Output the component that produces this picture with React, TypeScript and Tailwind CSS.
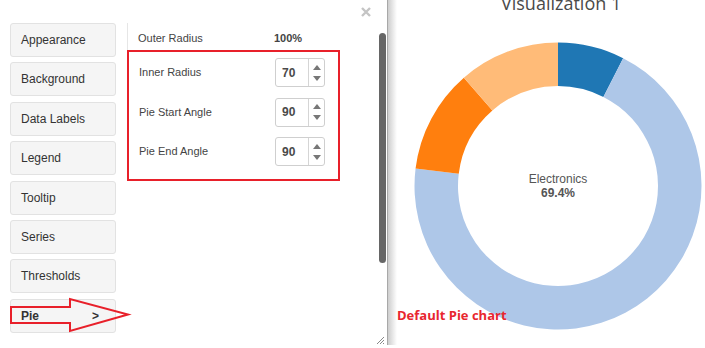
import React from 'react';

const navItems = ['Appearance', 'Background', 'Data Labels', 'Legend', 'Tooltip', 'Series', 'Thresholds', 'Pie'];

const segments = [
  { from: 0, to: 27, color: '#1f77b4' },
  { from: 27, to: 277, color: '#aec7e8' },
  { from: 277, to: 319, color: '#ff7f0e' },
  { from: 319, to: 360, color: '#ffbb78' },
];

// angles in degrees, clockwise from 12 o'clock
function arcPath(a0: number, a1: number, r0: number, r1: number, cx = 150, cy = 150) {
  const pt = (a: number, r: number) => {
    const rad = (a * Math.PI) / 180;
    return [cx + r * Math.sin(rad), cy - r * Math.cos(rad)];
  };
  const large = a1 - a0 > 180 ? 1 : 0;
  const [x0, y0] = pt(a0, r1);
  const [x1, y1] = pt(a1, r1);
  const [x2, y2] = pt(a1, r0);
  const [x3, y3] = pt(a0, r0);
  return `M${x0} ${y0} A${r1} ${r1} 0 ${large} 1 ${x1} ${y1} L${x2} ${y2} A${r0} ${r0} 0 ${large} 0 ${x3} ${y3} Z`;
}

function Spinner() {
  return (
    <div className="flex flex-col items-center justify-center gap-[6px] w-[16px] border-l border-[#d5d5d5]">
      <svg width="8" height="5" viewBox="0 0 8 5">
        <path d="M0 5 L4 0 L8 5 Z" fill="#777" />
      </svg>
      <svg width="8" height="5" viewBox="0 0 8 5">
        <path d="M0 0 L8 0 L4 5 Z" fill="#777" />
      </svg>
    </div>
  );
}

function NumberField({ label, value }: { label: string; value: string }) {
  return (
    <div className="flex items-center h-[29px]">
      <div className="w-[136px] text-[11px] text-[#444]">{label}</div>
      <div className="flex h-[29px] w-[50px] rounded-[3px] border border-[#cfcfcf] bg-white">
        <div className="flex-1 flex items-center pl-[6px] text-[12px] font-bold text-[#4a4a4a]">{value}</div>
        <Spinner />
      </div>
    </div>
  );
}

export default function App() {
  return (
    <div className="relative flex w-[705px] h-[348px] overflow-hidden bg-white font-['Liberation_Sans',Arial,sans-serif]">
      {/* Settings dialog */}
      <div className="relative flex w-[387px] h-[345px] shrink-0 bg-white">
        <nav className="flex flex-col gap-[5.4px] pl-[10px] pt-[23px]">
          {navItems.map((item) => (
            <button
              key={item}
              className="flex items-center justify-between w-[106px] h-[34px] px-[10px] rounded-[3px] border border-[#e2e2e2] bg-[#f5f5f5] text-left text-[12px] text-[#333]"
            >
              <span className={item === 'Pie' ? 'font-bold' : ''}>{item}</span>
              {item === 'Pie' && <span className="font-bold pr-[6px]">&gt;</span>}
            </button>
          ))}
        </nav>

        <div className="ml-[11px] mt-[23px] w-[252px]">
          <div className="border-l border-[#e6e6e6]">
            <div className="flex items-center h-[27px] pl-[10px] pt-[4px]">
              <div className="w-[136px] text-[11px] text-[#444]">Outer Radius</div>
              <div className="text-[11px] font-bold text-[#444]">100%</div>
            </div>
            <div className="ml-[-1px] w-[213px] border-2 border-[#e8202a] pl-[10px] pt-[6px] pb-[13px] flex flex-col gap-[10.5px]">
              <NumberField label="Inner Radius" value="70" />
              <NumberField label="Pie Start Angle" value="90" />
              <NumberField label="Pie End Angle" value="90" />
            </div>
          </div>
        </div>

        <div className="ml-auto mr-[1px] mt-[33px] w-[7px] h-[230px] rounded-full bg-[#666]" />

        {/* close */}
        <svg className="absolute left-[361px] top-[7px]" width="10" height="10" viewBox="0 0 10 10">
          <path d="M1 1 L9 9 M9 1 L1 9" stroke="#c4c4c4" strokeWidth="2.4" />
        </svg>

        {/* resize grip */}
        <svg className="absolute left-[376px] top-[336px]" width="8" height="8" viewBox="0 0 8 8">
          <path d="M1 8 L8 1 M4 8 L8 4 M7 8 L8 7" stroke="#888" strokeWidth="1" />
        </svg>

        {/* annotation arrow */}
        <svg className="absolute left-0 top-[296px]" width="132" height="38" viewBox="0 296 132 38">
          <path
            d="M11 307 L70 307 L70 299 L128 314.5 L70 331 L70 323 L11 323 Z"
            fill="none"
            stroke="#e8202a"
            strokeWidth="2"
          />
        </svg>
      </div>

      {/* Chart area */}
      <div className="relative flex-1 flex flex-col border-l border-[#a8a8a8] h-[345px]">
        <div className="absolute left-0 top-0 w-[9px] h-full bg-linear-to-r from-[#cdcdcd] to-white/0" />
        <div className="mt-[-9px] pl-[113px] text-[18px] leading-[24px] text-[#4a4a4a] font-['Open_Sans',sans-serif]">
          Visualization 1
        </div>
        <svg className="ml-[20px] mt-[21px]" width="300" height="300" viewBox="0 0 300 300">
          {segments.map((s) => (
            <path key={s.color} d={arcPath(s.from, s.to, 100, 143.5)} fill={s.color} />
          ))}
          <text x="150" y="147" textAnchor="middle" fontSize="12" fill="#555" fontFamily="Liberation Sans, Arial, sans-serif">
            Electronics
          </text>
          <text x="150" y="161" textAnchor="middle" fontSize="12" fontWeight="bold" fill="#555" fontFamily="Liberation Sans, Arial, sans-serif">
            69.4%
          </text>
        </svg>
        <div className="absolute left-[9px] top-[306px] text-[13px] font-bold text-[#e8262f] font-['Open_Sans',sans-serif]">
          Default Pie chart
        </div>
      </div>
    </div>
  );
}
